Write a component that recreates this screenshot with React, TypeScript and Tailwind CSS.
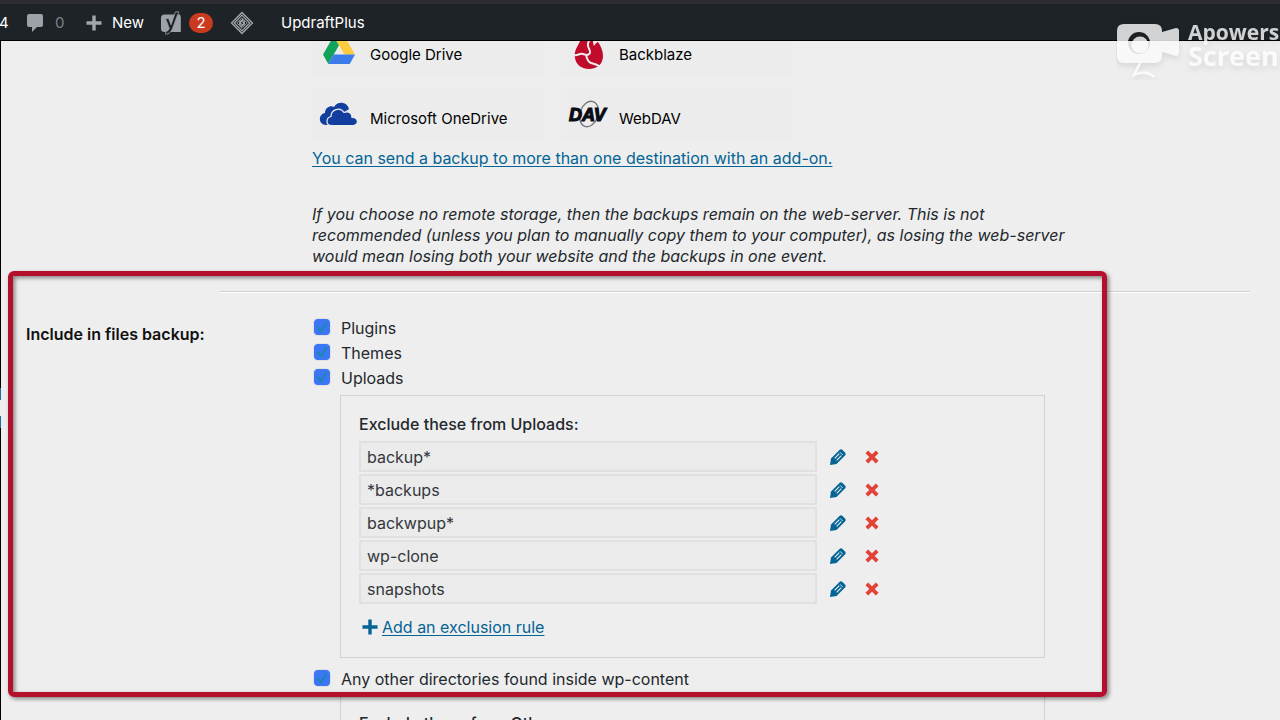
import { useId } from 'react'

interface ExclusionRule {
  id: number
  value: string
}

const uploadRules: ExclusionRule[] = [
  { id: 1, value: 'backup*' },
  { id: 2, value: '*backups' },
  { id: 3, value: 'backwpup*' },
  { id: 4, value: 'wp-clone' },
  { id: 5, value: 'snapshots' },
]

function CommentIcon() {
  return (
    <svg className="w-4 h-5" viewBox="0 0 16 20" fill="#9ca2a7" aria-hidden="true">
      <path d="M2 1h12q2 0 2 2v9q0 2-2 2h-4l-5 5v-5H2q-2 0-2-2V3q0-2 2-2z" />
    </svg>
  )
}

function PlusIcon({ className }: { className: string }) {
  return (
    <svg className={className} viewBox="0 0 16 16" fill="currentColor" aria-hidden="true">
      <path d="M6.300 .5h3.400v5.800h5.800v3.400H9.700v5.800H6.300V9.700H.5V6.300h5.800z" />
    </svg>
  )
}

function YoastIcon() {
  return (
    <svg className="w-5 h-6" viewBox="0 0 20 24" aria-hidden="true">
      <path fill="#9ca2a7" d="M3.500 3.500H19q.8 1 .8 3.500v14H3.500Q0 21 0 17.500V7q0-3.500 3.500-3.500z" />
      <path
        fill="#1d2327"
        stroke="#9ca2a7"
        strokeWidth=".8"
        d="M14.500 .8h3.300L11.500 17.500q-2 5.500-6.800 5.700v-2.800q3-.3 3.600-2.900L4.500 7.500h3.200l2.300 6.300z"
      />
    </svg>
  )
}

function DiamondIcon() {
  return (
    <svg className="w-6 h-6" viewBox="0 0 24 24" fill="none" stroke="#a2a7ab" aria-hidden="true">
      <path d="M12 1.500 22.500 12 12 22.500 1.500 12z" strokeWidth="1.300" />
      <path d="M12 4.200 19.800 12 12 19.800 4.200 12z" strokeWidth="1.200" />
      <path d="M12 6.800 17.200 12 12 17.200 6.800 12z" strokeWidth=".9" />
      <path d="M13.500 8.500 10 11v2l1.500-.5M10.500 15.500l3.500-2.500v-2l-1.500 .5" strokeWidth="1.800" />
    </svg>
  )
}

function GoogleDriveIcon() {
  return (
    <svg className="w-8 h-7" viewBox="0 0 32 28" aria-hidden="true">
      <path fill="#11a25b" d="M10.700 0 0 18.500 5.300 28 16 9.300z" />
      <path fill="#fdcb3e" d="M10.700 0h10.600L32 18.500H21.400z" />
      <path fill="#3b7bea" d="M10.700 18.500H32L26.700 28H5.300z" />
    </svg>
  )
}

function BackblazeIcon() {
  return (
    <svg className="w-8 h-10" viewBox="0 0 32 40" aria-hidden="true">
      <path
        fill="#c10b2b"
        d="M12 1c5 0 9 3 9 9 0 2 0 4 1 6 1-2 2-3 4-4 3 4 5 9 5 14 0 8-6 13-14 13C10 39 4 35 3 28c-1-3 0-6 1-9 3-6 6-11 8-18z"
      />
      <path
        fill="none"
        stroke="#ececec"
        strokeWidth="2"
        strokeLinecap="round"
        d="M2 25c4 1 5-2 9-1 3 1 5 2 7-1 1-3-3-5-2-9 0-3 2-4 3-6M14 25c1 4 2 7 5 8s5 1 8 3"
      />
    </svg>
  )
}

function OneDriveIcon() {
  return (
    <svg className="w-10 h-6" viewBox="0 0 40 24" aria-hidden="true">
      <path fill="#123ea0" d="M10 23H7c-8 0-8-11-1-12 0-6 6-8 9-6 3-6 13-6 15 2l-6 4-9 2z" />
      <path
        fill="#123ea0"
        stroke="#ececec"
        strokeWidth="1.200"
        d="M13 23.500c-7 0-6-8-1-9 0-7 9-10 13-4 5-2 8 1 8 5 7 0 7 8 1 8z"
      />
    </svg>
  )
}

function WebDavIcon() {
  return (
    <svg className="w-10 h-8" viewBox="0 0 40 32" aria-hidden="true">
      <ellipse cx="21" cy="16" rx="9" ry="13" fill="none" stroke="#77777d" strokeWidth="1.400" transform="rotate(18 21 16)" />
      <text
        x="1"
        y="23"
        fill="#0b0b16"
        stroke="#0b0b16"
        strokeWidth="1.200"
        fontFamily="Liberation Sans, sans-serif"
        fontSize="18"
        fontWeight="700"
        fontStyle="italic"
      >
        DAV
      </text>
    </svg>
  )
}

function PencilIcon() {
  return (
    <svg className="w-4 h-4" viewBox="0 0 16 16" aria-hidden="true">
      <path fill="#036495" d="M0 16 1 9.500 9.500 1q1.500-1.400 3 0l2.500 2.500q1.400 1.500 0 3L6.500 15z" />
      <path stroke="#eee" strokeWidth="1.100" d="m4.700 9.300 4.600-4.600M6.700 11.300l4.600-4.600" />
      <path stroke="#eee" strokeWidth=".9" d="m10 3.300 2.700 2.700" />
    </svg>
  )
}

function DeleteIcon() {
  return (
    <svg className="w-3.5 h-3.5" viewBox="0 0 14 14" aria-hidden="true">
      <path stroke="#e24339" strokeWidth="3.800" d="m1.800 1.800 10.400 10.400M12.200 1.800 1.800 12.200" />
    </svg>
  )
}

function Destination({ icon, name }: { icon: React.ReactNode; name: string }) {
  return (
    <div className="flex items-center h-[52px] bg-[#ececec]">
      <span className="flex justify-center w-[54px] mr-1">{icon}</span>
      <span className="pt-2.5 text-[15px]">{name}</span>
    </div>
  )
}

function CheckOption({ label }: { label: string }) {
  const id = useId()

  return (
    <div className="flex items-center h-[25px]">
      <span className="relative flex w-4 h-4 ml-px mr-[11px] outline outline-[#e0e0e4] rounded-[3px]">
        <input
          id={id}
          type="checkbox"
          defaultChecked
          className="peer appearance-none w-4 h-4 rounded-[3px] border border-gray-400 checked:border-[#3b76f5] checked:bg-[#3b76f5]"
        />
        <svg
          className="absolute inset-0 w-4 h-4 pointer-events-none opacity-0 peer-checked:opacity-100"
          viewBox="0 0 16 16"
          fill="none"
          aria-hidden="true"
        >
          <path stroke="#1d87ae" strokeWidth="2.200" d="m3.500 8 3.500 4 6-9" />
        </svg>
      </span>
      <label htmlFor={id} className="pt-0.5">{label}</label>
    </div>
  )
}

function RuleRow({ rule }: { rule: ExclusionRule }) {
  return (
    <div className="flex items-center">
      <input
        type="text"
        aria-label="Exclusion rule"
        defaultValue={rule.value}
        readOnly
        className="w-[458px] h-[31px] px-1.5 border-2 border-[#e0e0e0] bg-[#ebebeb] text-[#32373c]"
      />
      <button type="button" aria-label="Edit" className="ml-[13px]">
        <PencilIcon />
      </button>
      <button type="button" aria-label="Delete" className="ml-[19px]">
        <DeleteIcon />
      </button>
    </div>
  )
}

function AdminBar() {
  return (
    <header className="relative z-10 bg-[#1d2327] border-t-4 border-t-[#2c2d33] border-b border-b-black text-[15px] text-white">
      <nav className="flex items-center h-9 pt-0.5">
        <span className="w-7 -ml-px">4</span>
        <a href="#comments" className="flex items-center gap-3 w-[59px] text-[#7d8287]">
          <CommentIcon />
          0
        </a>
        <a href="#new" className="flex items-center gap-2.5 w-[75px]">
          <PlusIcon className="w-4 h-4 text-[#a2a7ab]" />
          New
        </a>
        <a href="#seo" className="flex items-center gap-2 w-[69px]">
          <YoastIcon />
          <span className="flex items-center justify-center w-6 h-5 rounded-full bg-[#ca3a1f]">2</span>
        </a>
        <a href="#builder" aria-label="Builder" className="w-[51px]">
          <DiamondIcon />
        </a>
        <a href="#updraftplus">UpdraftPlus</a>
      </nav>
    </header>
  )
}

function Watermark() {
  return (
    <div className="absolute z-20 top-5 left-[1116px] right-0 flex gap-2 overflow-hidden text-white/80 pointer-events-none">
      <svg className="shrink-0 w-16 h-[60px] drop-shadow-md" viewBox="0 0 64 60" fill="currentColor" aria-hidden="true">
        <path
          fillRule="evenodd"
          d="M8 4h31q7 0 7 7v1l14-4q3 0 3 3v22q0 3-3 3l-14-4v4q0 7-7 7H8q-7 0-7-7V11q0-7 7-7zM23 12a11 11 0 1 0 0 22 11 11 0 1 0 0-22z"
        />
        <circle cx="24" cy="25" r="8.500" />
        <path fill="none" stroke="currentColor" strokeWidth="2.500" d="M24 43 18 55q12-6 20 2" />
      </svg>
      <div className="font-['Open_Sans',sans-serif] font-bold whitespace-nowrap drop-shadow-md">
        <div className="text-[21px] leading-6">Apowers</div>
        <div className="text-[27px] leading-6">Screen</div>
      </div>
    </div>
  )
}

export default function App() {
  return (
    <div className="relative flex flex-col h-screen overflow-hidden bg-[#eee] font-[Inter,sans-serif] text-[16px] leading-5 text-[#23282d]">
      <AdminBar />
      <Watermark />

      <div className="flex flex-1 min-h-0">
        <div className="flex flex-col shrink-0 w-px bg-black">
          <span className="h-3 mt-[347px] bg-[#1c6f9f]" />
          <span className="h-4 bg-[#eee]" />
          <span className="h-3 bg-[#1c6f9f]" />
        </div>

        <main className="flex-1 -mt-[17px]">
          <section className="pl-[311px] pr-[210px] text-black">
            <div className="grid grid-cols-[232px_232px] gap-x-[17px] gap-y-3">
              <Destination icon={<GoogleDriveIcon />} name="Google Drive" />
              <Destination icon={<BackblazeIcon />} name="Backblaze" />
              <Destination icon={<OneDriveIcon />} name="Microsoft OneDrive" />
              <Destination icon={<WebDavIcon />} name="WebDAV" />
            </div>
            <a href="#addons" className="inline-block mt-2 text-[#036495] underline underline-offset-2">
              You can send a backup to more than one destination with an add-on.
            </a>
            <p className="mt-9 leading-[21px] italic text-[#23282d]">
              If you choose no remote storage, then the backups remain on the web-server. This is not
              recommended (unless you plan to manually copy them to your computer), as losing the web-server
              would mean losing both your website and the backups in one event.
            </p>
          </section>

          <section className="relative pt-5 mt-1">
            <hr className="ml-[219px] mr-[30px] border-t border-[#d0d0d0] border-b border-b-white" />
            <div className="flex pt-[21px]">
              <h2 className="shrink-0 w-[312px] pl-[25px] pt-2.5 font-semibold text-[#111]">
                Include in files backup:
              </h2>
              <div className="flex-1 mr-[235px]">
                <CheckOption label="Plugins" />
                <CheckOption label="Themes" />
                <CheckOption label="Uploads" />
                <fieldset className="mt-1.5 mb-[7px] ml-[27px] pt-[18px] pb-5 px-[18px] border border-[#d2d2d2]">
                  <div className="font-medium">Exclude these from Uploads:</div>
                  <div className="flex flex-col gap-0.5 mt-[7px]">
                    {uploadRules.map(rule => (
                      <RuleRow key={rule.id} rule={rule} />
                    ))}
                  </div>
                  <a href="#add-rule" className="flex items-center gap-1 mt-[13px] ml-[3px] text-[#036495]">
                    <PlusIcon className="w-4 h-4" />
                    <span className="underline underline-offset-2">Add an exclusion rule</span>
                  </a>
                </fieldset>
                <CheckOption label="Any other directories found inside wp-content" />
              </div>
            </div>
            <div className="absolute top-0 -bottom-[7px] left-[7px] right-[173px] border-[5px] border-[#b50f2e] rounded-md shadow-[2px_2px_4px_rgba(0,0,0,0.45),inset_2px_2px_4px_rgba(0,0,0,0.45)] pointer-events-none" />
          </section>

          <fieldset className="mt-1 ml-[339px] mr-[235px] px-[18px] pt-[18px] pb-5 border border-[#d2d2d2]">
            <div className="font-medium">Exclude these from Others:</div>
          </fieldset>
        </main>
      </div>
    </div>
  )
}
